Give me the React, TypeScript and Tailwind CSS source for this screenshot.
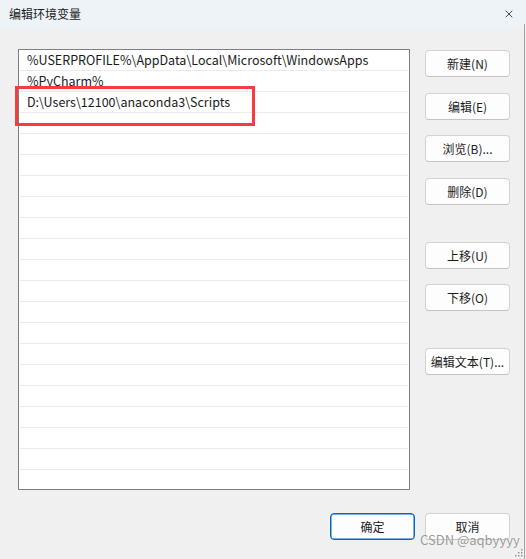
import { X } from "lucide-react"

const paths = [
  "%USERPROFILE%\\AppData\\Local\\Microsoft\\WindowsApps",
  "%PyCharm%",
  "D:\\Users\\12100\\anaconda3\\Scripts",
]

const ROW_COUNT = 21

function DlgButton({ label, className = "", primary = false }: { label: string; className?: string; primary?: boolean }) {
  return (
    <button
      type="button"
      className={`flex h-[27px] w-[85px] items-center justify-center rounded-[4px] bg-[#fdfdfd] text-[12px] text-[#1b1b1b] ${
        primary
          ? "border border-[#0067c0] shadow-[inset_0_0_0_0.5px_#0067c0]"
          : "border border-[#d3d3d3] border-b-[#c4c4c4]"
      } ${className}`}
    >
      {label}
    </button>
  )
}

export default function App() {
  const rows = Array.from({ length: ROW_COUNT }, (_, i) => paths[i] ?? "")

  return (
    <div
      className="relative h-[559px] w-[526px] overflow-hidden bg-[#f0f0f0] text-[#1b1b1b]"
      style={{ fontFamily: '"Noto Sans CJK SC", "Noto Sans", sans-serif' }}
    >
      {/* title bar */}
      <div className="flex h-[28px] items-center justify-between bg-[#eef3f8] pl-[9px] pr-[11px]">
        <span className="text-[12px] leading-none">编辑环境变量</span>
        <X className="h-[12px] w-[12px] text-[#202020]" strokeWidth={1.6} />
      </div>

      <div className="flex pl-[18px] pt-[21px]">
        {/* path list */}
        <div className="h-[441px] w-[392px] overflow-hidden border border-[#7c7f86] bg-white">
          {rows.map((text, i) => (
            <div
              key={i}
              className="mx-px flex h-[21px] items-center border-b border-[#ebebeb] pl-[7px] text-[12.5px] leading-none whitespace-nowrap"
            >
              {text}
            </div>
          ))}
        </div>

        {/* side buttons */}
        <div className="ml-[15px] flex flex-col pt-px">
          <DlgButton label="新建(N)" />
          <DlgButton label="编辑(E)" className="mt-[16px]" />
          <DlgButton label="浏览(B)..." className="mt-[15px]" />
          <DlgButton label="删除(D)" className="mt-[16px]" />
          <DlgButton label="上移(U)" className="mt-[37px]" />
          <DlgButton label="下移(O)" className="mt-[15px]" />
          <DlgButton label="编辑文本(T)..." className="mt-[37px]" />
        </div>
      </div>

      {/* bottom buttons */}
      <div className="flex justify-end gap-[10px] pr-[16px] pt-[23px]">
        <DlgButton label="确定" primary />
        <DlgButton label="取消" />
      </div>

      {/* annotation box */}
      <div className="pointer-events-none absolute left-[15px] top-[86px] h-[40px] w-[240px] border-[3px] border-[#f83b3d]" />

      {/* window edge */}
      <div className="absolute right-[1px] top-[24px] bottom-0 w-px bg-[#a3a3a3]" />

      {/* watermark */}
      <div className="pointer-events-none absolute left-[420px] top-[533px] text-[13px] leading-none text-[#8c8c8c]/90 [text-shadow:0_0_1px_#fff]">
        CSDN @aqbyyyy
      </div>

      {/* resize grip */}
      <svg className="absolute bottom-[2px] right-[3px]" width="8" height="8" viewBox="0 0 8 8">
        <g fill="#9a9a9a">
          <rect x="6" y="0" width="1.5" height="1.5" />
          <rect x="3" y="3" width="1.5" height="1.5" />
          <rect x="6" y="3" width="1.5" height="1.5" />
          <rect x="0" y="6" width="1.5" height="1.5" />
          <rect x="3" y="6" width="1.5" height="1.5" />
          <rect x="6" y="6" width="1.5" height="1.5" />
        </g>
      </svg>
    </div>
  )
}
